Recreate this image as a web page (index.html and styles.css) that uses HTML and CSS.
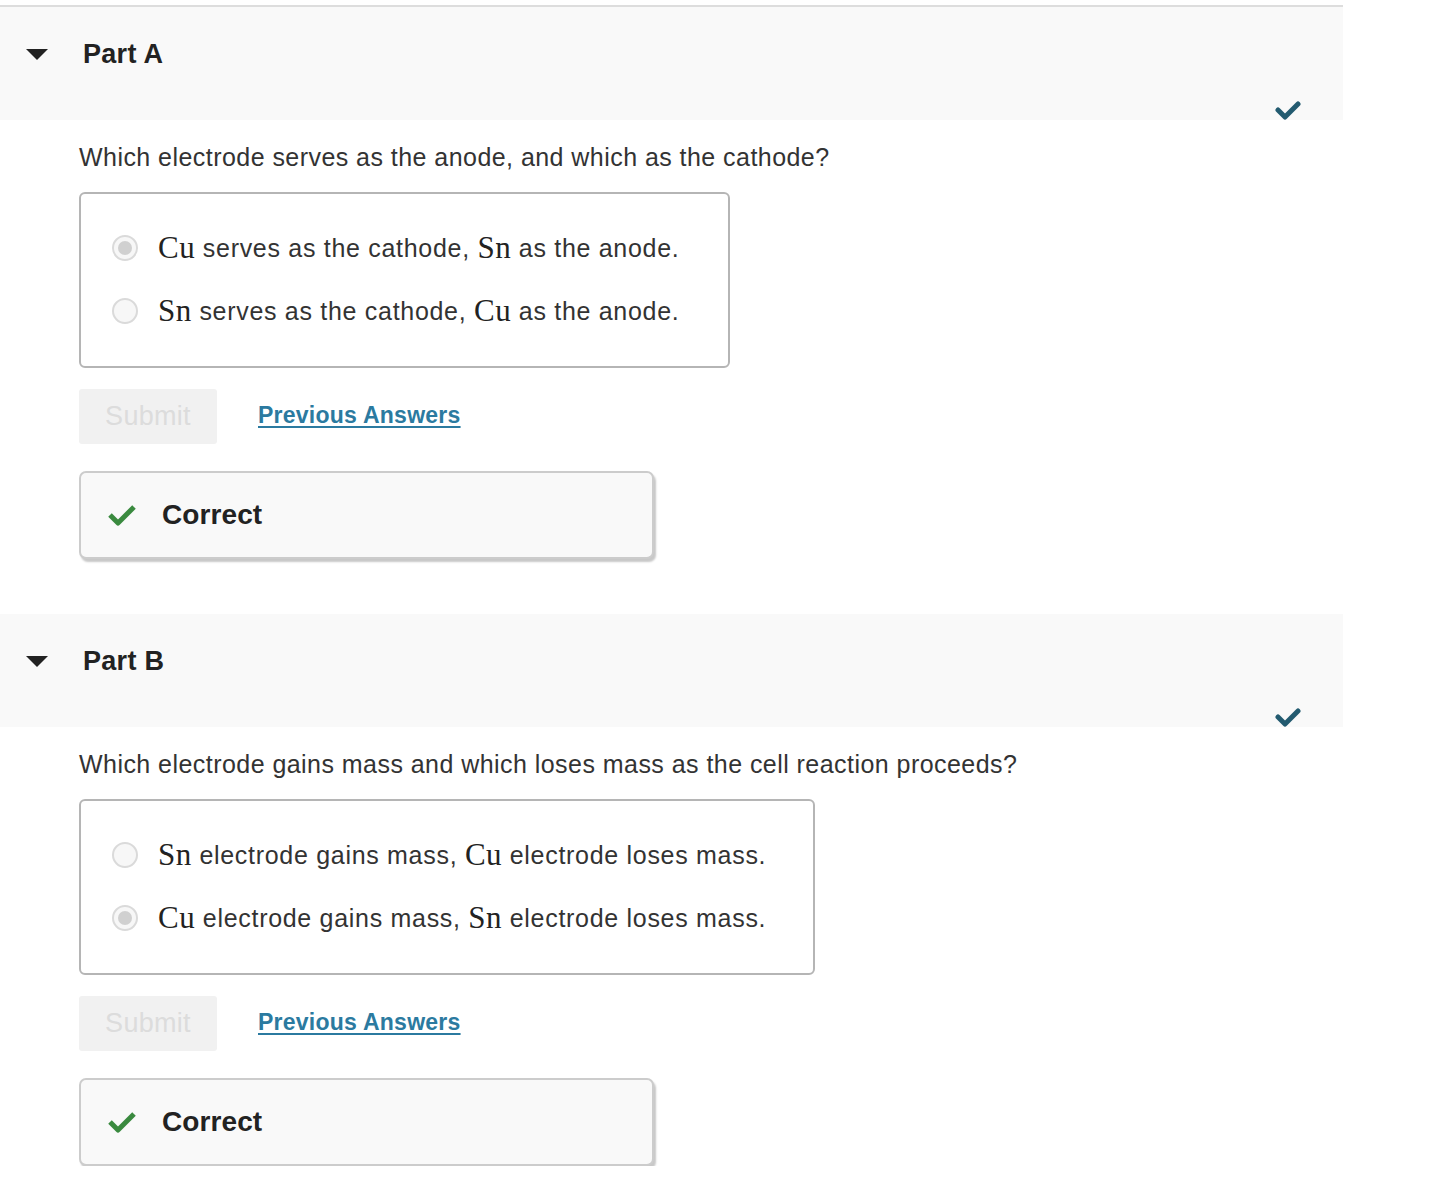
FILE: index.html
```html
<!DOCTYPE html>
<html>

<head>
    <meta charset="UTF-8">
    <title>Parts</title>
    <link rel="stylesheet" href="styles.css">
</head>

<body>

    <div id="parts">
        <div class="part">
            <div class="part-header">
                <span class="caret"></span>
                <h2 class="part-title">Part A</h2>
                <svg class="done" width="26" height="20" viewBox="0 0 26 20">
                    <path d="M3 10 L10 17 L23 4" fill="none" stroke="#235b70" stroke-width="5" stroke-linecap="round" stroke-linejoin="round" />
                </svg>
            </div>
            <div class="part-body">
                <p class="question">Which electrode serves as the anode, and which as the cathode?</p>
                <ul class="choices choices-a">
                    <li><span class="radio checked"></span><span class="m">Cu</span> serves as the cathode, <span class="m">Sn</span> as the anode.</li>
                    <li><span class="radio"></span><span class="m">Sn</span> serves as the cathode, <span class="m">Cu</span> as the anode.</li>
                </ul>
                <div class="actions">
                    <button class="submit" disabled>Submit</button>
                    <a class="prev" href="#">Previous Answers</a>
                </div>
                <div class="feedback">
                    <svg width="30" height="24" viewBox="0 0 30 24">
                        <path d="M3 12 L11 20 L27 4" fill="none" stroke="#3a8a3f" stroke-width="5" stroke-linejoin="round" />
                    </svg>
                    <span>Correct</span>
                </div>
            </div>
        </div>

        <div class="part">
            <div class="part-header">
                <span class="caret"></span>
                <h2 class="part-title">Part B</h2>
                <svg class="done" width="26" height="20" viewBox="0 0 26 20">
                    <path d="M3 10 L10 17 L23 4" fill="none" stroke="#235b70" stroke-width="5" stroke-linecap="round" stroke-linejoin="round" />
                </svg>
            </div>
            <div class="part-body">
                <p class="question">Which electrode gains mass and which loses mass as the cell reaction proceeds?</p>
                <ul class="choices choices-b">
                    <li><span class="radio"></span><span class="m">Sn</span> electrode gains mass, <span class="m">Cu</span> electrode loses mass.</li>
                    <li><span class="radio checked"></span><span class="m">Cu</span> electrode gains mass, <span class="m">Sn</span> electrode loses mass.</li>
                </ul>
                <div class="actions">
                    <button class="submit" disabled>Submit</button>
                    <a class="prev" href="#">Previous Answers</a>
                </div>
                <div class="feedback">
                    <svg width="30" height="24" viewBox="0 0 30 24">
                        <path d="M3 12 L11 20 L27 4" fill="none" stroke="#3a8a3f" stroke-width="5" stroke-linejoin="round" />
                    </svg>
                    <span>Correct</span>
                </div>
            </div>
        </div>
    </div>

</body>

</html>
```

FILE: styles.css
```css
* {
    margin: 0;
    padding: 0;
}

body {
    font-family: "Liberation Sans", Arial, sans-serif;
    color: #333333;
    background: #ffffff;
}

#parts {
    width: 1343px;
    padding-top: 5px;
}

.part {
    border-top: 2px solid #dddddd;
}

.part + .part {
    border-top: none;
    margin-top: 55px;
}

.part-header {
    position: relative;
    height: 113px;
    background: #f9f9f9;
    display: flex;
    align-items: flex-start;
}

.caret {
    width: 0;
    height: 0;
    margin: 42px 0 0 26px;
    border-left: 11px solid transparent;
    border-right: 11px solid transparent;
    border-top: 11px solid #222222;
}

.part-title {
    margin: 32px 0 0 35px;
    font-size: 27px;
    letter-spacing: 0.3px;
    font-weight: bold;
    color: #222222;
}

.done {
    position: absolute;
    right: 42px;
    bottom: 0;
}

.part-body {
    padding-left: 79px;
}

.question {
    margin-top: 23px;
    font-size: 25px;
    letter-spacing: 0.45px;
    line-height: 28px;
}

.choices {
    list-style: none;
    margin-top: 21px;
    border: 2px solid #b5b5b5;
    border-radius: 6px;
    padding: 37px 0 38px 31px;
}

.choices-a {
    width: 616px;
}

.choices-b {
    width: 701px;
}

.choices li {
    display: flex;
    align-items: center;
    font-size: 25px;
    letter-spacing: 0.7px;
    height: 34px;
    white-space: pre;
}

.choices li + li {
    margin-top: 29px;
}

.m {
    font-family: "Liberation Serif", "Times New Roman", serif;
    font-size: 31px;
    letter-spacing: 0.5px;
    color: #222222;
}

.radio {
    width: 22px;
    height: 22px;
    margin-right: 20px;
    border: 2px solid #dadada;
    border-radius: 50%;
    background: #f7f7f7;
    box-sizing: content-box;
    flex-shrink: 0;
    position: relative;
}

.radio.checked::after {
    content: "";
    position: absolute;
    left: 4px;
    top: 4px;
    width: 14px;
    height: 14px;
    border-radius: 50%;
    background: #d0d0d0;
}

.actions {
    display: flex;
    align-items: center;
    margin-top: 21px;
}

.submit {
    width: 138px;
    height: 55px;
    border: none;
    border-radius: 3px;
    background: #f1f1f1;
    color: #dcdcdc;
    font-family: "Liberation Sans", Arial, sans-serif;
    font-size: 27px;
    letter-spacing: 0.3px;
}

.prev {
    margin-left: 41px;
    margin-top: -3px;
    font-size: 23px;
    letter-spacing: 0.25px;
    font-weight: bold;
    color: #2b7aa0;
    text-decoration: underline;
    text-underline-offset: 3px;
}

.feedback {
    display: flex;
    align-items: center;
    width: 575px;
    height: 88px;
    margin-top: 27px;
    border: 2px solid #cccccc;
    border-radius: 7px;
    background: #f9f9f9;
    box-shadow: 2px 3px 2px #c8c8c8;
    box-sizing: border-box;
}

.feedback svg {
    margin-left: 26px;
}

.feedback span {
    margin-left: 25px;
    font-size: 28px;
    letter-spacing: 0.1px;
    font-weight: bold;
    color: #222222;
}
```
